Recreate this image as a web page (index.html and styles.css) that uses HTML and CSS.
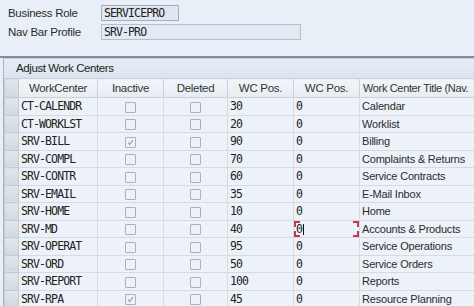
FILE: index.html
```html
<!DOCTYPE html>
<html lang="en">
<head>
    <meta charset="UTF-8">
    <meta name="viewport" content="width=device-width, initial-scale=1.0">
    <title>Adjust Work Centers</title>
    <link rel="stylesheet" href="styles.css">
</head>
<body>

    <div class="form">
        <div class="field">
            <label for="role">Business Role</label>
            <input type="text" id="role" class="short" value="SERVICEPRO" readonly>
        </div>
        <div class="field">
            <label for="navbar">Nav Bar Profile</label>
            <input type="text" id="navbar" class="long" value="SRV-PRO" readonly>
        </div>
    </div>

    <div class="panel">
        <div class="panel-title">Adjust Work Centers</div>
        <div class="grid-wrap">
            <table class="grid">
                <colgroup>
                    <col class="c-sel">
                    <col class="c-wc">
                    <col class="c-chk">
                    <col class="c-chk2">
                    <col class="c-pos">
                    <col class="c-pos">
                    <col class="c-title">
                </colgroup>
                <thead>
                    <tr>
                        <th class="sel"></th>
                        <th>WorkCenter</th>
                        <th>Inactive</th>
                        <th>Deleted</th>
                        <th>WC Pos.</th>
                        <th>WC Pos.</th>
                        <th class="left">Work Center Title (Nav.</th>
                    </tr>
                </thead>
                <tbody>
                    <tr><td class="sel"></td><td class="mono">CT-CALENDR</td><td class="chk"><span class="box"></span></td><td class="chk"><span class="box"></span></td><td class="mono">30</td><td class="mono">0</td><td>Calendar</td></tr>
                    <tr><td class="sel"></td><td class="mono">CT-WORKLST</td><td class="chk"><span class="box"></span></td><td class="chk"><span class="box"></span></td><td class="mono">20</td><td class="mono">0</td><td>Worklist</td></tr>
                    <tr><td class="sel"></td><td class="mono">SRV-BILL</td><td class="chk"><span class="box checked"><svg viewBox="0 0 11 11"><polyline points="2.5,5.5 4.5,8 8.5,2.5"/></svg></span></td><td class="chk"><span class="box"></span></td><td class="mono">90</td><td class="mono">0</td><td>Billing</td></tr>
                    <tr><td class="sel"></td><td class="mono">SRV-COMPL</td><td class="chk"><span class="box"></span></td><td class="chk"><span class="box"></span></td><td class="mono">70</td><td class="mono">0</td><td>Complaints &amp; Returns</td></tr>
                    <tr><td class="sel"></td><td class="mono">SRV-CONTR</td><td class="chk"><span class="box"></span></td><td class="chk"><span class="box"></span></td><td class="mono">60</td><td class="mono">0</td><td>Service Contracts</td></tr>
                    <tr><td class="sel"></td><td class="mono">SRV-EMAIL</td><td class="chk"><span class="box"></span></td><td class="chk"><span class="box"></span></td><td class="mono">35</td><td class="mono">0</td><td>E-Mail Inbox</td></tr>
                    <tr><td class="sel"></td><td class="mono">SRV-HOME</td><td class="chk"><span class="box"></span></td><td class="chk"><span class="box"></span></td><td class="mono">10</td><td class="mono">0</td><td>Home</td></tr>
                    <tr><td class="sel"></td><td class="mono">SRV-MD</td><td class="chk"><span class="box"></span></td><td class="chk"><span class="box"></span></td><td class="mono">40</td><td class="mono focus">0<span class="caret"></span></td><td>Accounts &amp; Products</td></tr>
                    <tr><td class="sel"></td><td class="mono">SRV-OPERAT</td><td class="chk"><span class="box"></span></td><td class="chk"><span class="box"></span></td><td class="mono">95</td><td class="mono">0</td><td>Service Operations</td></tr>
                    <tr><td class="sel"></td><td class="mono">SRV-ORD</td><td class="chk"><span class="box"></span></td><td class="chk"><span class="box"></span></td><td class="mono">50</td><td class="mono">0</td><td>Service Orders</td></tr>
                    <tr><td class="sel"></td><td class="mono">SRV-REPORT</td><td class="chk"><span class="box"></span></td><td class="chk"><span class="box"></span></td><td class="mono">100</td><td class="mono">0</td><td>Reports</td></tr>
                    <tr><td class="sel"></td><td class="mono">SRV-RPA</td><td class="chk"><span class="box checked"><svg viewBox="0 0 11 11"><polyline points="2.5,5.5 4.5,8 8.5,2.5"/></svg></span></td><td class="chk"><span class="box"></span></td><td class="mono">45</td><td class="mono">0</td><td>Resource Planning</td></tr>
                </tbody>
            </table>
        </div>
    </div>

</body>
</html>
```

FILE: styles.css
```css
body {
    margin: 0;
    width: 474px;
    height: 306px;
    overflow: hidden;
    background-color: #e9eff6;
    font-family: "Liberation Sans", Arial, sans-serif;
    font-size: 11px;
    color: #2b2b2b;
}
.form {
    height: 58px;
    box-sizing: border-box;
    padding: 5px 0 0 8px;
    border-bottom: 2px solid #7d8fa3;
    display: flex;
    flex-direction: column;
    gap: 3px;
}
.field {
    display: flex;
    align-items: center;
    height: 16px;
}
.field label {
    width: 93px;
    font-size: 11.5px;
    letter-spacing: -0.3px;
}
.field input {
    box-sizing: border-box;
    height: 16px;
    margin: 0;
    padding: 0 2px;
    border: 1px solid #a4afba;
    background-color: #dfe7f0;
    font-family: "DejaVu Sans Mono", monospace;
    font-size: 11.5px;
    letter-spacing: -0.9px;
    color: #222;
    outline: none;
}
.field input.short {
    width: 78px;
}
.field input.long {
    width: 200px;
    background-color: #e2eaf3;
    border-color: #b4bfcb;
}
.panel {
    margin-left: 3px;
    border-left: 1px solid #a8b5c3;
}
.panel-title {
    height: 19px;
    line-height: 19px;
    padding-left: 12px;
    font-size: 11.5px;
    letter-spacing: -0.4px;
    color: #222;
    background: linear-gradient(#e6edf5, #dbe4ee);
    border-top: 1px solid #c4cfdb;
}
.grid-wrap {
    overflow: hidden;
}
.grid {
    table-layout: fixed;
    width: 520px;
    border-collapse: collapse;
}
.c-sel { width: 14px; }
.c-wc { width: 79px; }
.c-chk { width: 66px; }
.c-chk2 { width: 64px; }
.c-pos { width: 66px; }
.c-title { width: 165px; }
.grid th {
    height: 18px;
    padding: 0;
    font-weight: normal;
    font-size: 11.5px;
    letter-spacing: -0.3px;
    color: #333;
    text-align: center;
    background: linear-gradient(#f1f5f9, #e7edf3);
    border: 1px solid #c9d2dc;
    white-space: nowrap;
    overflow: hidden;
}
.grid th.left {
    text-align: left;
    padding-left: 3px;
    font-size: 11px;
    letter-spacing: -0.35px;
}
.grid td {
    height: 16.5px;
    padding: 0 0 0 2px;
    background-color: #edf2f8;
    border: 1px solid #d3dce6;
    white-space: nowrap;
    overflow: hidden;
    font-size: 11px;
    letter-spacing: -0.2px;
}
.grid .sel {
    padding: 0;
    background: linear-gradient(#e3e7ec, #d2d8df);
    border-color: #c2cad3;
}
.grid td.mono {
    font-family: "DejaVu Sans Mono", monospace;
    font-size: 11.5px;
    letter-spacing: -0.9px;
    color: #222;
}
.grid td.chk {
    text-align: center;
    padding: 0;
}
.box {
    display: inline-block;
    width: 11px;
    height: 11px;
    box-sizing: border-box;
    border: 1px solid #a7b2bd;
    border-radius: 1px;
    background-color: #eef2f6;
    vertical-align: middle;
}
.box svg {
    display: block;
    width: 9px;
    height: 9px;
}
.box polyline {
    fill: none;
    stroke: #8c97a3;
    stroke-width: 1.3;
}
.grid td.focus {
    background:
        linear-gradient(#c8364f, #c8364f) left top / 2px 6px no-repeat,
        linear-gradient(#c8364f, #c8364f) left top / 6px 2px no-repeat,
        linear-gradient(#c8364f, #c8364f) right top / 2px 6px no-repeat,
        linear-gradient(#c8364f, #c8364f) right top / 6px 2px no-repeat,
        linear-gradient(#c8364f, #c8364f) left bottom / 2px 6px no-repeat,
        linear-gradient(#c8364f, #c8364f) left bottom / 6px 2px no-repeat,
        linear-gradient(#c8364f, #c8364f) right bottom / 2px 6px no-repeat,
        linear-gradient(#c8364f, #c8364f) right bottom / 6px 2px no-repeat,
        #edf2f8;
}
.caret {
    display: inline-block;
    width: 1px;
    height: 11px;
    margin-left: 1px;
    background-color: #111;
    vertical-align: -2px;
}
```
